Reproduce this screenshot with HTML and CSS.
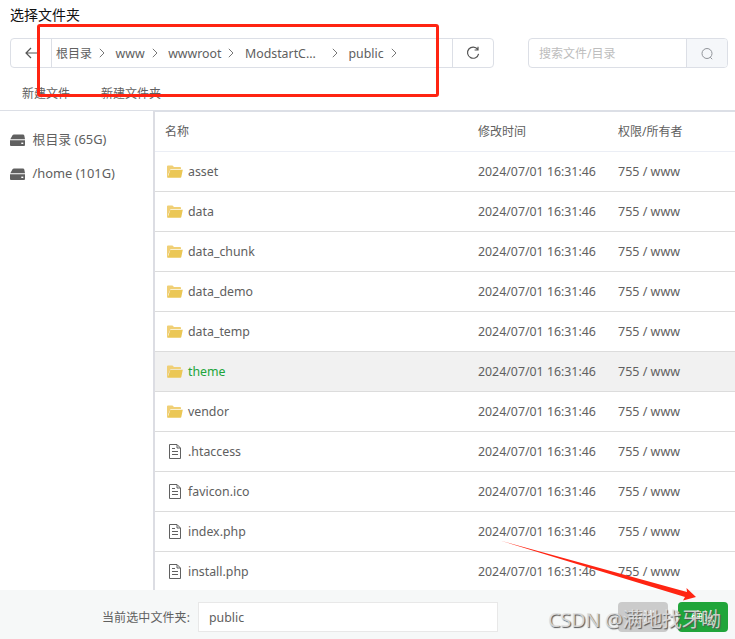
FILE: index.html
```html
<!DOCTYPE html>
<html lang="zh-CN">
<head>
<meta charset="utf-8">
<title>选择文件夹</title>
<link rel="stylesheet" href="styles.css">
</head>
<body>
<svg class="defs" aria-hidden="true">
  <symbol id="folder" viewBox="0 0 16 13"><path fill="#f0cf75" d="M0 1.5Q0 .5 1 .5H5.5L7 2H13.2Q14 2 14 3V4H3.6L1 10V12.5H.5Q0 12.5 0 12Z"/><path fill="#ebc755" d="M3.4 4.7H15.8L14.3 12Q14.2 12.8 13.4 12.8H.6Z"/></symbol>
  <symbol id="file" viewBox="0 0 12 15"><path fill="none" stroke="#606060" d="M.5.5H8L11.5 4V14.5H.5Z M8 .8V4H11.2 M3 4.5H6 M3 7.5H9 M3 10.5H9"/></symbol>
  <symbol id="disk" viewBox="0 0 15 12"><path fill="#606060" d="M4 .4H13Q14 .4 14.3 1.4L15 5.2H.3L2.5 1.2Q3 .4 4 .4ZM0 6.2H15V11Q15 12 14 12H1Q0 12 0 11Z"/><path fill="#fff" d="M11.3 8.6h2v1.4h-2z"/></symbol>
  <symbol id="chev" viewBox="0 0 6 10"><path fill="none" stroke="#777" d="M.8.8 5 5 .8 9.2"/></symbol>
</svg>
<div class="dialog">
  <h1 class="title">选择文件夹</h1>
  <div class="toolbar">
    <div class="path">
      <button class="back"><svg width="13" height="12" viewBox="0 0 13 12"><path d="M13 6H1M6 1 1 6l5 5"/></svg></button>
      <div class="crumbs">
        <span class="root">根目录</span><svg class="chev"><use href="#chev"/></svg>
        <span>www</span><svg class="chev"><use href="#chev"/></svg>
        <span>wwwroot</span><svg class="chev"><use href="#chev"/></svg>
        <span class="site">ModstartC...</span><svg class="chev"><use href="#chev"/></svg>
        <span>public</span><svg class="chev"><use href="#chev"/></svg>
      </div>
      <button class="refresh"><svg width="14" height="14" viewBox="0 0 14 14"><path d="M11.7 3.4A5.6 5.6 0 1 0 12.6 7.8M12 .8V4H8.6"/></svg></button>
    </div>
    <div class="search">
      <span class="placeholder">搜索文件/目录</span>
      <button class="find"><svg width="13" height="13" viewBox="0 0 13 13"><circle cx="6" cy="6.5" r="5"/><path d="m9.2 10.2 2 2"/></svg></button>
    </div>
  </div>
  <div class="actions"><span>新建文件</span><span>新建文件夹</span></div>
  <div class="main">
    <div class="side">
      <div class="disk"><svg><use href="#disk"/></svg><span>根目录 (65G)</span></div>
      <div class="disk"><svg><use href="#disk"/></svg><span>/home (101G)</span></div>
    </div>
    <div class="list">
      <div class="row head"><span>名称</span><span>修改时间</span><span>权限/所有者</span></div>
      <div class="row"><span class="name"><svg class="folder"><use href="#folder"/></svg>asset</span><span>2024/07/01 16:31:46</span><span class="perm">755 / www</span></div>
      <div class="row"><span class="name"><svg class="folder"><use href="#folder"/></svg>data</span><span>2024/07/01 16:31:46</span><span class="perm">755 / www</span></div>
      <div class="row"><span class="name"><svg class="folder"><use href="#folder"/></svg>data_chunk</span><span>2024/07/01 16:31:46</span><span class="perm">755 / www</span></div>
      <div class="row"><span class="name"><svg class="folder"><use href="#folder"/></svg>data_demo</span><span>2024/07/01 16:31:46</span><span class="perm">755 / www</span></div>
      <div class="row"><span class="name"><svg class="folder"><use href="#folder"/></svg>data_temp</span><span>2024/07/01 16:31:46</span><span class="perm">755 / www</span></div>
      <div class="row active"><span class="name"><svg class="folder"><use href="#folder"/></svg>theme</span><span>2024/07/01 16:31:46</span><span class="perm">755 / www</span></div>
      <div class="row"><span class="name"><svg class="folder"><use href="#folder"/></svg>vendor</span><span>2024/07/01 16:31:46</span><span class="perm">755 / www</span></div>
      <div class="row"><span class="name"><svg class="file"><use href="#file"/></svg>.htaccess</span><span>2024/07/01 16:31:46</span><span class="perm">755 / www</span></div>
      <div class="row"><span class="name"><svg class="file"><use href="#file"/></svg>favicon.ico</span><span>2024/07/01 16:31:46</span><span class="perm">755 / www</span></div>
      <div class="row"><span class="name"><svg class="file"><use href="#file"/></svg>index.php</span><span>2024/07/01 16:31:46</span><span class="perm">755 / www</span></div>
      <div class="row"><span class="name"><svg class="file"><use href="#file"/></svg>install.php</span><span>2024/07/01 16:31:46</span><span class="perm">755 / www</span></div>
    </div>
  </div>
  <div class="footer">
    <span class="label">当前选中文件夹:</span>
    <div class="field">public</div>
    <button class="btn cancel">取消</button>
    <button class="btn ok">确认</button>
  </div>
  <div class="highlight"></div>
  <svg class="arrow" width="735" height="639" viewBox="0 0 735 639"><path fill="#ff2412" d="M500 540.5 687 592 686.500 588 696 597 683 600.500 685 597Z"/></svg>
  <div class="watermark">CSDN @满地找牙呦</div>
</div>
</body>
</html>
```
FILE: styles.css
```css
* { box-sizing: border-box; }
body { margin: 0; background: #fff; color: #606060; font: 12.35px/20px "Noto Sans", "Noto Sans CJK SC", sans-serif; }
button { border: 0; padding: 0; background: none; font: inherit; display: flex; align-items: center; justify-content: center; }
svg { flex: none; }
.defs { position: absolute; width: 0; height: 0; }
.dialog { position: relative; width: 735px; height: 639px; overflow: hidden; display: flex; flex-direction: column; }
.title { margin: 0; padding: 5px 10px 0; height: 38px; font-size: 14px; line-height: 20px; font-weight: 400; color: #111; }
.toolbar { display: flex; justify-content: space-between; padding: 0 7px 0 10px; height: 30px; }
.path { width: 484px; display: flex; border: 1px solid #dcdfe6; border-radius: 4px; }
.back { width: 41px; border-right: 1px solid #dcdfe6; }
.back svg, .refresh svg { fill: none; stroke: #555; stroke-width: 1.2; }
.refresh { width: 41px; border-left: 1px solid #dcdfe6; }
.crumbs { flex: 1; display: flex; align-items: center; padding-left: 4px; white-space: nowrap; }
.crumbs span { margin-right: 7px; padding-top: 2px; }
.crumbs .root { font-size: 12px; }
.crumbs .site { width: 80px; }
.chev { width: 6px; height: 10px; margin-right: 10.5px; }
.search { width: 200px; display: flex; border: 1px solid #dcdfe6; border-radius: 4px; overflow: hidden; }
.placeholder { flex: 1; padding-left: 10px; line-height: 29px; font-size: 12px; color: #bdbdbd; }
.find { width: 41px; background: #f5f7fa; border-left: 1px solid #dcdfe6; }
.find svg { fill: none; stroke: #909399; }
.actions { height: 42px; padding: 16px 22px 0; display: flex; gap: 31px; font-size: 12px; }
.main { height: 480px; display: flex; border-top: 1px solid #dcdfe6; }
.side { width: 155px; padding: 12px 10px; border-right: 2px solid #dcdde3; font-size: 12.9px; }
.disk { height: 34px; display: flex; align-items: center; gap: 7.5px; }
.disk svg { width: 15px; height: 12px; }
.disk span { padding-bottom: 2px; }
.list { flex: 1; overflow: hidden; border-top: 1px solid #dcdfe6; }
.row { height: 40px; display: grid; grid-template-columns: 313px 140px 1fr; align-items: center; padding-left: 10px; border-bottom: 1px solid #dcdcdc; white-space: nowrap; }
.head { font-size: 12px; border-color: #ebeef5; }
.name { display: flex; align-items: center; padding-left: 2px; }
.perm { font-size: 12.5px; }
.folder { width: 16px; height: 13px; margin-right: 5px; }
.file { width: 12px; height: 15px; margin: 0 7px 0 2px; }
.active { background: #f1f1f1; }
.active .name { color: #20a53a; }
.footer { height: 49px; background: #f6f8f8; display: flex; align-items: center; padding: 5px 7px 0 102px; }
.label { width: 96px; padding-top: 2px; font-size: 12px; letter-spacing: .1px; white-space: nowrap; }
.field { width: 300px; height: 30px; padding-left: 10px; line-height: 29px; border: 1px solid #e8e8e8; background: #fff; }
.btn { width: 50px; height: 30px; border-radius: 4px; color: #fff; font-size: 12px; }
.cancel { margin-left: 120px; background: #cbcbcb; }
.ok { margin-left: 10px; background: #20a53a; }
.highlight { position: absolute; left: 37px; top: 24px; width: 402px; height: 73px; border: 3px solid #ff2412; border-radius: 3px; }
.arrow { position: absolute; left: 0; top: 0; }
.watermark { position: absolute; left: 548px; top: 606px; font-size: 20px; line-height: 28px; white-space: nowrap; color: rgba(225,225,225,.85); text-shadow: 1px 1px 1px #555; letter-spacing: -.35px; }
```
